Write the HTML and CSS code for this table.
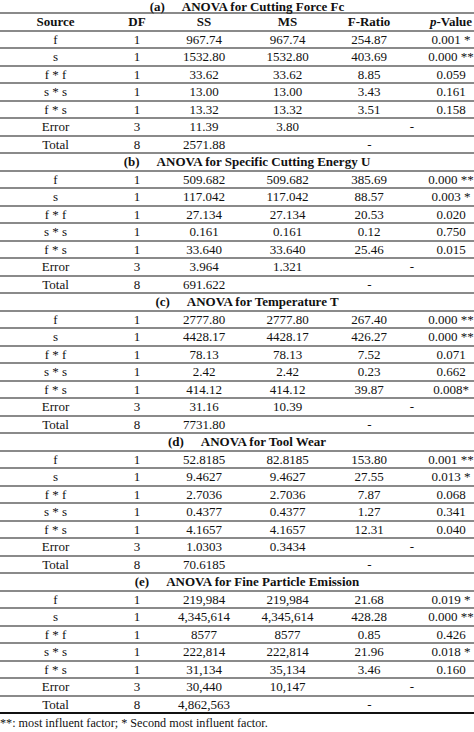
FILE: index.html
```html
<!DOCTYPE html>
<html lang="en">
<head>
<meta charset="utf-8">
<title>ANOVA tables</title>
<link rel="stylesheet" href="styles.css">
</head>
<body>
<div class="sheet">
  <div class="row title first"><span>(a)</span><span>ANOVA for Cutting Force Fc</span></div>
  <div class="row head">
    <div>Source</div><div>DF</div><div>SS</div><div>MS</div><div>F-Ratio</div><div><i>p</i>-Value</div>
  </div>

  <div class="row"><div>f</div><div>1</div><div>967.74</div><div>967.74</div><div>254.87</div><div>0.001 *</div></div>
  <div class="row"><div>s</div><div>1</div><div>1532.80</div><div>1532.80</div><div>403.69</div><div>0.000 **</div></div>
  <div class="row"><div>f * f</div><div>1</div><div>33.62</div><div>33.62</div><div>8.85</div><div>0.059</div></div>
  <div class="row"><div>s * s</div><div>1</div><div>13.00</div><div>13.00</div><div>3.43</div><div>0.161</div></div>
  <div class="row"><div>f * s</div><div>1</div><div>13.32</div><div>13.32</div><div>3.51</div><div>0.158</div></div>
  <div class="row"><div>Error</div><div>3</div><div>11.39</div><div>3.80</div><div class="span2">-</div></div>
  <div class="row"><div>Total</div><div>8</div><div>2571.88</div><div class="span3">-</div></div>

  <div class="row title"><span>(b)</span><span>ANOVA for Specific Cutting Energy U</span></div>
  <div class="row"><div>f</div><div>1</div><div>509.682</div><div>509.682</div><div>385.69</div><div>0.000 **</div></div>
  <div class="row"><div>s</div><div>1</div><div>117.042</div><div>117.042</div><div>88.57</div><div>0.003 *</div></div>
  <div class="row"><div>f * f</div><div>1</div><div>27.134</div><div>27.134</div><div>20.53</div><div>0.020</div></div>
  <div class="row"><div>s * s</div><div>1</div><div>0.161</div><div>0.161</div><div>0.12</div><div>0.750</div></div>
  <div class="row"><div>f * s</div><div>1</div><div>33.640</div><div>33.640</div><div>25.46</div><div>0.015</div></div>
  <div class="row"><div>Error</div><div>3</div><div>3.964</div><div>1.321</div><div class="span2">-</div></div>
  <div class="row"><div>Total</div><div>8</div><div>691.622</div><div class="span3">-</div></div>

  <div class="row title"><span>(c)</span><span>ANOVA for Temperature T</span></div>
  <div class="row"><div>f</div><div>1</div><div>2777.80</div><div>2777.80</div><div>267.40</div><div>0.000 **</div></div>
  <div class="row"><div>s</div><div>1</div><div>4428.17</div><div>4428.17</div><div>426.27</div><div>0.000 **</div></div>
  <div class="row"><div>f * f</div><div>1</div><div>78.13</div><div>78.13</div><div>7.52</div><div>0.071</div></div>
  <div class="row"><div>s * s</div><div>1</div><div>2.42</div><div>2.42</div><div>0.23</div><div>0.662</div></div>
  <div class="row"><div>f * s</div><div>1</div><div>414.12</div><div>414.12</div><div>39.87</div><div>0.008*</div></div>
  <div class="row"><div>Error</div><div>3</div><div>31.16</div><div>10.39</div><div class="span2">-</div></div>
  <div class="row"><div>Total</div><div>8</div><div>7731.80</div><div class="span3">-</div></div>

  <div class="row title"><span>(d)</span><span>ANOVA for Tool Wear</span></div>
  <div class="row"><div>f</div><div>1</div><div>52.8185</div><div>82.8185</div><div>153.80</div><div>0.001 **</div></div>
  <div class="row"><div>s</div><div>1</div><div>9.4627</div><div>9.4627</div><div>27.55</div><div>0.013 *</div></div>
  <div class="row"><div>f * f</div><div>1</div><div>2.7036</div><div>2.7036</div><div>7.87</div><div>0.068</div></div>
  <div class="row"><div>s * s</div><div>1</div><div>0.4377</div><div>0.4377</div><div>1.27</div><div>0.341</div></div>
  <div class="row"><div>f * s</div><div>1</div><div>4.1657</div><div>4.1657</div><div>12.31</div><div>0.040</div></div>
  <div class="row"><div>Error</div><div>3</div><div>1.0303</div><div>0.3434</div><div class="span2">-</div></div>
  <div class="row"><div>Total</div><div>8</div><div>70.6185</div><div class="span3">-</div></div>

  <div class="row title"><span>(e)</span><span>ANOVA for Fine Particle Emission</span></div>
  <div class="row"><div>f</div><div>1</div><div>219,984</div><div>219,984</div><div>21.68</div><div>0.019 *</div></div>
  <div class="row"><div>s</div><div>1</div><div>4,345,614</div><div>4,345,614</div><div>428.28</div><div>0.000 **</div></div>
  <div class="row"><div>f * f</div><div>1</div><div>8577</div><div>8577</div><div>0.85</div><div>0.426</div></div>
  <div class="row"><div>s * s</div><div>1</div><div>222,814</div><div>222,814</div><div>21.96</div><div>0.018 *</div></div>
  <div class="row"><div>f * s</div><div>1</div><div>31,134</div><div>35,134</div><div>3.46</div><div>0.160</div></div>
  <div class="row"><div>Error</div><div>3</div><div>30,440</div><div>10,147</div><div class="span2">-</div></div>
  <div class="row last"><div>Total</div><div>8</div><div>4,862,563</div><div class="span3">-</div></div>

  <p class="note">**: most influent factor; * Second most influent factor.</p>
</div>
</body>
</html>
```

FILE: styles.css
```css
html, body {
  margin: 0;
  padding: 0;
  background: #ffffff;
  overflow: hidden;
}

.sheet {
  width: 494px;
  font-family: "Liberation Serif", "Times New Roman", serif;
  font-size: 13px;
  color: #111111;
}

.row {
  display: grid;
  grid-template-columns: 111px 52px 82px 85px 78px 86px;
  align-items: center;
  justify-items: center;
  height: 17.5px;
  box-sizing: border-box;
  border-bottom: 2px solid #8a8a8a;
  line-height: 15px;
  white-space: nowrap;
}

.row.first {
  height: 14px;
}

.row.head {
  font-weight: bold;
}

.row.title {
  display: flex;
  justify-content: center;
  gap: 17px;
  font-weight: bold;
}

.span2 {
  grid-column: span 2;
}

.span3 {
  grid-column: span 3;
}

.row.last {
  border-bottom: 2px solid #111111;
}

.note {
  margin: 0;
  height: 18px;
  line-height: 18px;
  font-size: 12.2px;
  white-space: nowrap;
}
```
